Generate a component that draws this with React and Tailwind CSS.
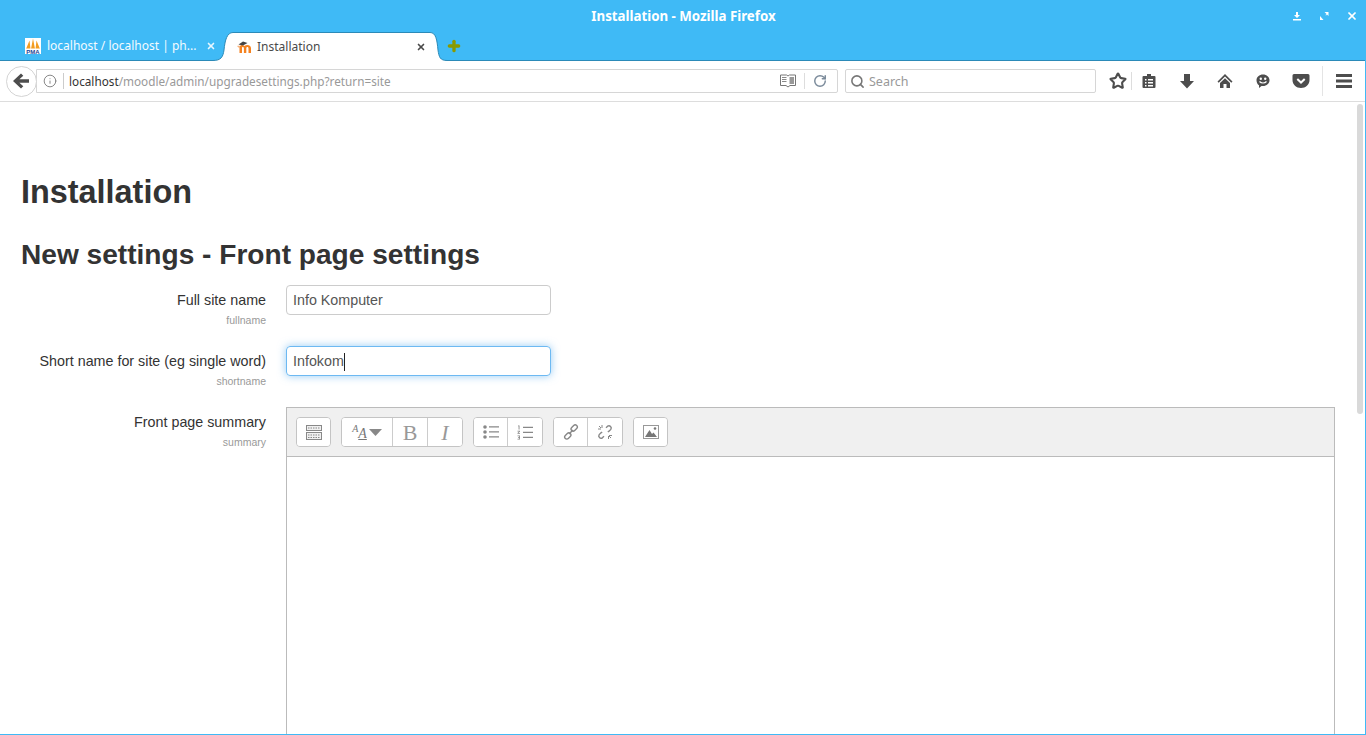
import { Info, RotateCw, Search, Star, X, Plus } from "lucide-react";

function ClipboardIcon() {
  return (
    <svg width="16" height="16" viewBox="0 0 16 16" fill="#4d4d4d" className="shrink-0">
      <path d="M6 1h4v2h3.500a1 1 0 0 1 1 1v10a1 1 0 0 1-1 1h-11a1 1 0 0 1-1-1V4a1 1 0 0 1 1-1H6z" />
      <path d="M4 6h1.500v1.500H4zM7 6h5v1.500H7zM4 9h1.500v1.500H4zM7 9h5v1.500H7zM4 12h1.500v1.500H4zM7 12h5v1.500H7z" fill="#fff" />
    </svg>
  );
}

function DownIcon() {
  return (
    <svg width="16" height="16" viewBox="0 0 16 16" fill="#4d4d4d" className="shrink-0">
      <path d="M5 1h6v7h4l-7 7.500L1 8h4z" />
    </svg>
  );
}

function BackIcon() {
  return (
    <svg width="18" height="18" viewBox="0 0 18 18" fill="#4d4d4d" className="mr-[2px]">
      <path d="M9 1.500l2.300 2.300L7.400 7.300H17v3.400H7.400l3.900 3.500L9 16.500 1 9z" />
    </svg>
  );
}

function ReaderIcon() {
  return (
    <svg width="16" height="14" viewBox="0 0 16 14" className="shrink-0">
      <path d="M.5 1h6L8 2l1.500-1h6v10.500H10L8 13l-2-1.500H.5z" fill="#fff" stroke="#777" />
      <path d="M9.500 3H14v7H9.500z" fill="#999" />
      <path d="M2 3.500h4.500M2 5.500h4.500M2 7.500h4.500" stroke="#888" />
    </svg>
  );
}

function HomeIcon() {
  return (
    <svg width="16" height="16" viewBox="0 0 16 16" fill="#4d4d4d" className="shrink-0">
      <path d="M8 1 0.500 8.500l1.200 1.200L8 3.600l6.300 6.100 1.200-1.200z" />
      <path d="M8 5.200 3 10v5h3.500v-4h3v4H13v-5z" />
    </svg>
  );
}

function SmileIcon() {
  return (
    <svg width="16" height="16" viewBox="0 0 16 16" className="shrink-0">
      <path d="M8 1.500c3.700 0 6.500 2.500 6.500 5.700S11.700 13 8 13H6.500L4 15v-2.700C2.500 11.300 1.500 9.400 1.500 7.200 1.500 4 4.300 1.500 8 1.500z" fill="#4d4d4d" />
      <circle cx="5.800" cy="5.800" r="1.200" fill="#fff" />
      <circle cx="10.200" cy="5.800" r="1.200" fill="#fff" />
      <path d="M4.500 8.500c1.800 2 5.200 2 7 0" stroke="#fff" strokeWidth="1.200" fill="none" />
    </svg>
  );
}

function PocketIcon() {
  return (
    <svg width="18" height="16" viewBox="0 0 18 16" className="shrink-0">
      <path d="M2 1h14a1.500 1.500 0 0 1 1.500 1.500V7c0 4.500-3.800 8-8.500 8S.5 11.500.5 7V2.500A1.500 1.500 0 0 1 2 1z" fill="#4d4d4d" />
      <path d="M5.300 6 9 9.500 12.700 6" stroke="#fff" strokeWidth="2" fill="none" />
    </svg>
  );
}

function PmaIcon() {
  return (
    <svg width="16" height="16" viewBox="0 0 16 16" className="shrink-0">
      <rect width="16" height="16" fill="#fff" />
      <path d="M1 11 4.500 2.500l1 8.500zM6 11 8 .5 10 11zM10.500 11l1-8.500L15 11z" fill="#f39c1f" />
      <rect y="10.500" width="16" height="5.500" fill="#fff" />
      <text x="8" y="15.800" textAnchor="middle" fontSize="6" fontWeight="700" fill="#1c3f94" fontFamily="Liberation Sans">PMA</text>
    </svg>
  );
}

function MoodleIcon() {
  return (
    <svg width="16" height="16" viewBox="0 0 16 16" className="shrink-0">
      <path d="M3.500 14V8.800C3.500 7 4.500 6 6 6c1 0 1.800.3 2.600 1 .8-.7 1.600-1 2.600-1C13.700 6 15 7.300 15 9.500V14h-2.500V9.500c0-1-.4-1.500-1.100-1.500s-1.100.5-1.100 1.500V14H7.900V9.500c0-1-.4-1.500-1.100-1.500S6 8.500 6 9.500V14z" fill="#f58220" />
      <path d="M1 7c1-.3 2-.3 3 0v2.500c-1-.6-2-1.500-3-2.500z" fill="#f7b27a" />
      <path d="M2.500 5.500 7 2.500l4.500 1.500L7 6.500z" fill="#444" />
    </svg>
  );
}

function KeyboardIcon() {
  return (
    <svg width="16" height="15" viewBox="0 0 16 15" fill="none" stroke="#888">
      <rect x=".5" y=".5" width="15" height="5" fill="#f0f0f0" />
      <rect x=".5" y="7.500" width="15" height="7" fill="#f0f0f0" />
      <path d="M2 3h12M2 10h12M2 12.500h12" strokeDasharray="1.500 1" />
    </svg>
  );
}

function ListIcon() {
  return (
    <svg width="16" height="14" viewBox="0 0 16 14" fill="#888">
      <circle cx="2" cy="2" r="1.800" />
      <circle cx="2" cy="7" r="1.800" />
      <circle cx="2" cy="12" r="1.800" />
      <path d="M6 1.300h10v1.300H6zM6 6.300h10v1.300H6zM6 11.300h10v1.300H6z" />
    </svg>
  );
}

function NumListIcon() {
  return (
    <svg width="16" height="15" viewBox="0 0 16 15" fill="#888">
      <path d="M1 .5h1.500v4H1.600V1.300H1zM.5 5.700h2.500v.8L1.500 8H3v.7H.5v-.7L2 6.400H.5zM.5 10.500H3v4H.5v-.7h1.700v-.9H1v-.6h1.200v-1.100H.5z" />
      <path d="M6 1.800h10v1.300H6zM6 6.800h10v1.300H6zM6 11.800h10v1.300H6z" />
    </svg>
  );
}

function LinkIcon() {
  return (
    <svg width="16" height="16" viewBox="0 0 16 16" fill="none" stroke="#888" strokeWidth="1.400">
      <rect x="7.700" y="1.900" width="7" height="4.200" rx="2.100" transform="rotate(-45 11.200 4)" />
      <rect x="1.300" y="9.900" width="7" height="4.200" rx="2.100" transform="rotate(-45 4.800 12)" />
      <path d="M6 10 10 6" />
    </svg>
  );
}

function UnlinkIcon() {
  return (
    <svg width="16" height="16" viewBox="0 0 16 16" fill="none" stroke="#888" strokeWidth="1.400">
      <path d="M9 3.800 10.600 2.200a2.300 2.300 0 0 1 3.200 3.200L12 7.200 10.800 8M7 12.200 5.400 13.800a2.300 2.300 0 0 1-3.200-3.200L4 8.800 5.200 8" />
      <path d="M1 5h3M5 1v3M11.500 15v-3M15 11.500h-3M2 2l2 2M14 14l-2-2" strokeWidth="1" />
    </svg>
  );
}

function ImageIcon() {
  return (
    <svg width="16" height="14" viewBox="0 0 16 14">
      <rect x=".5" y=".5" width="15" height="13" fill="#fff" stroke="#999" />
      <path d="M2 12 6.500 5 9 9l1.500-1.500L14 12z" fill="#777" />
      <circle cx="12" cy="3.500" r="1.300" fill="#777" />
    </svg>
  );
}

function ToolButton({ children, className = "" }) {
  return <div className={"flex items-center justify-center h-[28px] bg-white " + className}>{children}</div>;
}

function Group({ children }) {
  return (
    <div className="flex divide-x divide-[#ccc] border border-[#c4c4c4] rounded-[4px] bg-white overflow-hidden">
      {children}
    </div>
  );
}

function Field({ label, name, value, focused }) {
  return (
    <div className="flex items-start">
      <div className="w-[266px] shrink-0 text-right pt-[6px]">
        <div className="text-[14.300px] leading-[18px] text-[#333]">{label}</div>
        <div className="text-[10.500px] leading-[14px] mt-[4px] text-[#999]">{name}</div>
      </div>
      <div
        className={
          focused
            ? "ml-[20px] w-[265px] h-[30px] rounded-[4px] border border-[#6db9f2] shadow-[0_0_8px_rgba(82,168,236,0.6)] flex items-center px-[6px] pt-px text-[14.300px] text-[#555]"
            : "ml-[20px] w-[265px] h-[30px] rounded-[4px] border border-[#ccc] flex items-center px-[6px] pt-px text-[14.300px] text-[#555]"
        }
      >
        {value}
        {focused && <span className="w-px h-[18px] bg-[#222]" />}
      </div>
    </div>
  );
}

export default function App() {
  return (
    <div className="h-[735px] w-[1366px] overflow-hidden flex flex-col bg-[#3fbaf6] border-r border-b border-[#3fbaf6] font-['Liberation_Sans',sans-serif]">
      <div className="h-[32px] shrink-0 flex items-center relative font-['Noto_Sans',sans-serif]">
        <div className="flex-1 text-center text-white text-[13.300px] font-bold pt-px pl-[2px]">Installation - Mozilla Firefox</div>
        <div className="absolute right-[7px] top-[10px] flex items-center gap-[17px] text-white">
          <svg width="10" height="10" viewBox="0 0 10 10" fill="#fff">
            <path d="M4 1h2v3h2L5 7 2 4h2zM1 8h8v1.500H1z" />
          </svg>
          <svg width="10" height="10" viewBox="0 0 10 10" fill="#fff">
            <path d="M5.500 1H9.500v4L8 3.500 7 4.500 6.500 4l1-1zM1 5l3.500 4H1z" />
          </svg>
          <X size={12} strokeWidth={3.500} />
        </div>
      </div>

      <div className="h-[29px] shrink-0 flex items-center border-b border-[#2b8ab8] font-['Noto_Sans',sans-serif]">
        <div className="w-[213px] shrink-0 flex items-center pl-[25px] h-full">
          <PmaIcon />
          <span className="ml-[6px] flex-1 text-[#f4fbff] text-[12px] whitespace-nowrap">localhost / localhost | ph...</span>
          <X size={10} strokeWidth={4} className="text-[#e8f7ff] mr-[-3px] shrink-0" />
        </div>
        <div className="shrink-0 h-[29px] flex self-start">
          <svg width="20" height="29" viewBox="0 0 20 29" className="shrink-0">
            <path d="M0 28.500C8 28.500 10 25 11 18 12 8 14 .5 20 .5V29H0z" fill="#fff" />
            <path d="M0 28.500C8 28.500 10 25 11 18 12 8 14 .5 20 .5" fill="none" stroke="#2b8ab8" />
          </svg>
          <div className="w-[197px] bg-white border-t border-[#2b8ab8] flex items-center pl-[3px] pr-[4px]">
            <MoodleIcon />
            <span className="ml-[5px] flex-1 text-[#4a4a4a] text-[12px]">Installation</span>
            <X size={10} strokeWidth={4} className="text-[#4a4a4a] shrink-0" />
          </div>
          <svg width="17" height="29" viewBox="0 0 17 29" className="shrink-0">
            <path d="M17 28.500C10 28.500 9 25 8 18 7 8 6 .5 0 .5V29h17z" fill="#fff" />
            <path d="M17 28.500C10 28.500 9 25 8 18 7 8 6 .5 0 .5" fill="none" stroke="#2b8ab8" />
          </svg>
        </div>
        <Plus size={16} strokeWidth={5} className="ml-[-1px] text-[#8a9a00] shrink-0" />
      </div>

      <div className="h-[41px] shrink-0 bg-white border-b border-[#ddd] flex items-center pl-[6px] font-['Noto_Sans',sans-serif]">
        <div className="w-[31px] h-[31px] rounded-full border border-[#d4d4d4] flex items-center justify-center bg-white z-10 shrink-0">
          <BackIcon />
        </div>
        <div className="w-[802px] ml-[-1px] h-[24px] border border-[#d6d6d6] rounded-r-[2px] flex items-center text-[11.750px] shrink-0">
          <Info size={14} strokeWidth={1.500} className="ml-[6px] text-[#777] shrink-0" />
          <span className="w-px h-[16px] bg-[#ccc] ml-[6px] mr-[5px] shrink-0" />
          <span className="text-[#333] pt-px">localhost</span>
          <span className="text-[#999] flex-1 pt-px">/moodle/admin/upgradesettings.php?return=site</span>
          <ReaderIcon />
          <span className="w-px h-[16px] bg-[#ddd] ml-[8px] mr-[8px] shrink-0" />
          <RotateCw size={14} strokeWidth={2.500} className="mr-[10px] text-[#7a8a9a] shrink-0" />
        </div>
        <div className="w-[251px] ml-[7px] h-[24px] border border-[#d6d6d6] rounded-[2px] flex items-center text-[12.500px] text-[#999] shrink-0">
          <Search size={15} strokeWidth={2.500} className="ml-[4px] mr-[4px] text-[#777] shrink-0" />
          <span className="pt-[2px]">Search</span>
        </div>
        <Star size={18} strokeWidth={2.800} className="ml-[13px] text-[#4d4d4d] shrink-0" />
        <span className="w-px h-[18px] bg-[#ddd] ml-[4px] mr-[9px] shrink-0" />
        <ClipboardIcon />
        <div className="ml-[22px] flex"><DownIcon /></div>
        <div className="ml-[22px] flex"><HomeIcon /></div>
        <div className="ml-[22px] flex"><SmileIcon /></div>
        <div className="ml-[21px] flex"><PocketIcon /></div>
        <span className="w-px h-[30px] bg-[#e4e4e4] ml-[12px] mr-[13px] shrink-0" />
        <svg width="16" height="14" viewBox="0 0 16 14" fill="#4d4d4d" className="shrink-0">
          <path d="M0 0h16v3H0zM0 5.500h16v3H0zM0 11h16v3H0z" />
        </svg>
      </div>

      <div className="flex-1 min-h-0 bg-white flex">
        <div className="flex-1 min-w-0 pt-[70px] overflow-hidden">
          <h1 className="pl-[21px] text-[32.400px] leading-[40px] font-bold text-[#333]">Installation</h1>
          <h2 className="pl-[21px] mt-[23px] text-[28.100px] leading-[40px] font-bold text-[#333]">New settings - Front page settings</h2>
          <div className="mt-[10px] flex flex-col gap-[19px]">
            <Field label="Full site name" name="fullname" value="Info Komputer" />
            <Field label="Short name for site (eg single word)" name="shortname" value="Infokom" focused />
            <div className="flex items-start">
              <div className="w-[266px] shrink-0 text-right pt-[6px]">
                <div className="text-[14.300px] leading-[18px] text-[#333]">Front page summary</div>
                <div className="text-[10.500px] leading-[14px] mt-[4px] text-[#999]">summary</div>
              </div>
              <div className="ml-[20px] w-[1049px] h-[400px] border border-[#bbb]">
                <div className="h-[49px] bg-[#f0f0f0] border-b border-[#bbb] flex items-center pl-[9px] gap-[10px]">
                  <Group><ToolButton className="w-[33px]"><KeyboardIcon /></ToolButton></Group>
                  <Group>
                    <ToolButton className="w-[51px]">
                      <span className="font-['Liberation_Serif',serif] text-[#777] italic flex items-start leading-none">
                        <span className="text-[10px]">A</span>
                        <span className="text-[14px] underline mt-[3px]">A</span>
                      </span>
                      <svg width="13" height="7" viewBox="0 0 13 7" fill="#888" className="ml-[2px]"><path d="M0 0h13L6.500 7z" /></svg>
                    </ToolButton>
                    <ToolButton className="w-[35px] font-['Liberation_Serif',serif] text-[22px] text-[#999]">B</ToolButton>
                    <ToolButton className="w-[34px] font-['Liberation_Serif',serif] italic text-[22px] text-[#999]">I</ToolButton>
                  </Group>
                  <Group>
                    <ToolButton className="w-[34px]"><ListIcon /></ToolButton>
                    <ToolButton className="w-[34px]"><NumListIcon /></ToolButton>
                  </Group>
                  <Group>
                    <ToolButton className="w-[34px]"><LinkIcon /></ToolButton>
                    <ToolButton className="w-[34px]"><UnlinkIcon /></ToolButton>
                  </Group>
                  <Group><ToolButton className="w-[33px]"><ImageIcon /></ToolButton></Group>
                </div>
              </div>
            </div>
          </div>
        </div>
        <div className="w-[30px] shrink-0 pl-[22px] pt-[2px]">
          <div className="w-[6px] h-[310px] rounded-full bg-[#d9d9d9]" />
        </div>
      </div>
    </div>
  );
}
